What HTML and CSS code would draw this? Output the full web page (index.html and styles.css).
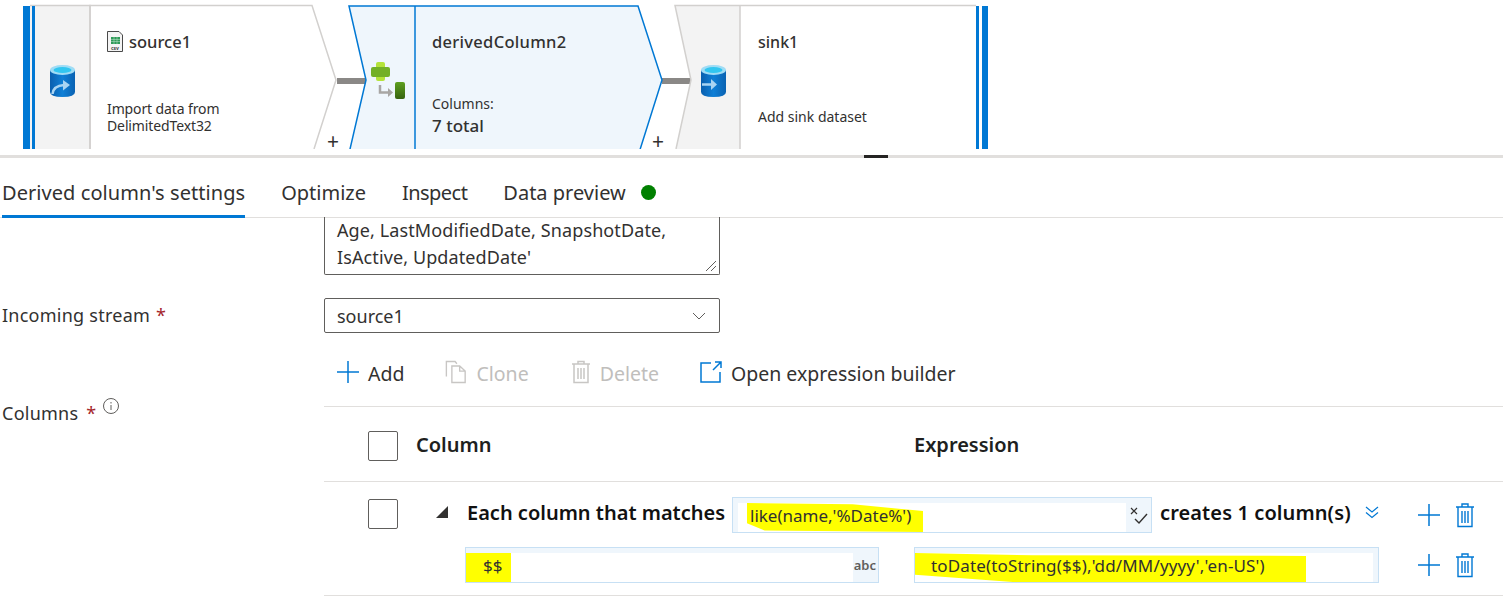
FILE: index.html
```html
<!DOCTYPE html>
<html lang="en">
<head>
<meta charset="utf-8">
<title>Derived column settings</title>
<link rel="stylesheet" href="styles.css">
</head>
<body>
<section class="canvas">
  <svg class="flow" width="1000" height="149" viewBox="0 0 1000 149">
    <defs>
      <linearGradient id="cyl" x1="0" x2="1" y1="0" y2="0"><stop offset="0" stop-color="#0a5fae"/><stop offset="0.5" stop-color="#0f7fd6"/><stop offset="1" stop-color="#0a62b2"/></linearGradient>
      <linearGradient id="bar" x1="0" x2="0" y1="0" y2="1"><stop offset="0" stop-color="#5ea01f"/><stop offset="1" stop-color="#37620f"/></linearGradient>
    </defs>
    <rect x="337" y="78" width="30" height="6" fill="#8a8886"/>
    <rect x="662" y="78" width="30" height="6" fill="#8a8886"/>
    <!-- source -->
    <path d="M23 149V6H312L336 80L314 149Z" fill="#fff"/>
    <path d="M30 149V6H90V149Z" fill="#f3f3f3"/>
    <path d="M90 149V5.500H312L336 80L314 149" fill="none" stroke="#d2d0ce" stroke-width="1.500"/>
    <path d="M30 5.500H90V149" fill="none" stroke="#d2d0ce" stroke-width="1.500"/>
    <rect x="23" y="6" width="7" height="143" fill="#0078d4"/>
    <rect x="32" y="6" width="3" height="143" fill="#0078d4"/>
    <!-- derived -->
    <path d="M349 6H638L662 80L638 156H348.400L366 80Z" fill="#eff6fc" stroke="#0078d4" stroke-width="1.500"/>
    <path d="M415 6V149" stroke="#0078d4" stroke-width="1.500"/>
    <!-- sink -->
    <path d="M675 6H988V149H676L691 80Z" fill="#fff"/>
    <path d="M675 6H740V149H676L691 80Z" fill="#f3f3f3"/>
    <path d="M740 5.500H976" stroke="#d2d0ce" stroke-width="1.500"/>
    <path d="M740 5.500V149M740 5.500H675L691 80L676 149" fill="none" stroke="#d2d0ce" stroke-width="1.500"/>
    <rect x="976" y="6" width="3" height="143" fill="#0078d4"/>
    <rect x="982" y="6" width="6" height="143" fill="#0078d4"/>
    <!-- source cylinder -->
    <path d="M50 70V92Q50 97 62.500 97T75 92V70Z" fill="url(#cyl)"/>
    <ellipse cx="62.500" cy="70" rx="12.500" ry="5" fill="#9fdcf5"/>
    <ellipse cx="62.500" cy="70" rx="9" ry="3" fill="#32c6f0"/>
    <path d="M52.500 94C53 89 57 85.500 64 85" fill="none" stroke="#a9d4f2" stroke-width="2.500"/>
    <path d="M63 80L70 85L63 90.500Z" fill="#a9d4f2"/>
    <!-- sink cylinder -->
    <path d="M701 70V92Q701 97 713.500 97T726 92V70Z" fill="url(#cyl)"/>
    <ellipse cx="713.500" cy="70" rx="12.500" ry="5" fill="#9fdcf5"/>
    <ellipse cx="713.500" cy="70" rx="9" ry="3" fill="#32c6f0"/>
    <path d="M702 84.500H712" stroke="#a9d4f2" stroke-width="2.500"/>
    <path d="M711 79L717 84.500L711 90Z" fill="#a9d4f2"/>
    <!-- derived icon -->
    <rect x="376" y="62" width="9" height="19" rx="2" fill="#b4e33a"/>
    <rect x="371" y="67" width="19" height="10" rx="2" fill="#73b026"/>
    <path d="M380 85V92.500H389" fill="none" stroke="#a8a6a4" stroke-width="2.500"/>
    <path d="M388 88L393 92.500L388 97Z" fill="#a8a6a4"/>
    <rect x="395" y="82" width="10" height="17" rx="2" fill="url(#bar)"/>
    <!-- csv file -->
    <path d="M107.500 31.500H119L122.500 35V51.500H107.500Z" fill="#f4f4f4" stroke="#4a4a4a"/>
    <rect x="111" y="37" width="9" height="7" fill="#2f9a58"/>
    <path d="M111 39.500H120M111 41.500H120M114 37V44M117 37V44" stroke="#bfe4cc" stroke-width=".500"/>
    <text class="csv" x="115" y="50" text-anchor="middle">csv</text>
  </svg>
  <div class="node-text source">
    <h3>source1</h3>
    <p class="desc">Import data from<br>DelimitedText32</p>
  </div>
  <div class="node-text derived">
    <h3>derivedColumn2</h3>
    <p class="desc">Columns:</p>
    <p class="total">7 total</p>
  </div>
  <div class="node-text sink">
    <h3>sink1</h3>
    <p class="desc">Add sink dataset</p>
  </div>
  <span class="plus plus-one">+</span>
  <span class="plus plus-two">+</span>
</section>

<div class="splitter"><span class="handle"></span></div>

<nav class="tabs">
  <a class="tab active">Derived column's settings</a>
  <a class="tab">Optimize</a>
  <a class="tab narrow">Inspect</a>
  <a class="tab">Data preview <i class="dot"></i></a>
</nav>

<main class="form">
  <div class="label"></div>
  <div class="textarea">Age, LastModifiedDate, SnapshotDate,<br>IsActive, UpdatedDate'
    <svg class="grip" width="12" height="12" viewBox="0 0 12 12"><path d="M1 11L11 1M6 11L11 6" stroke="#605e5c" fill="none"/></svg>
  </div>

  <div class="label stream">Incoming stream <span class="req">*</span></div>
  <div class="select">source1
    <svg width="14" height="8" viewBox="0 0 14 8"><path d="M1 1L7 7L13 1" fill="none" stroke="#605e5c"/></svg>
  </div>

  <div class="label cols">Columns <span class="req">*</span>
    <svg class="info" width="18" height="18" viewBox="0 0 18 18"><circle cx="9" cy="9" r="7.500" fill="none" stroke="#605e5c"/><path d="M9 8V13M9 5V6.500" stroke="#605e5c"/></svg>
  </div>
  <div class="columns">
    <div class="toolbar">
      <span class="tool t-add"><svg width="24" height="24" viewBox="0 0 24 24"><path d="M12 1V23M1 12H23" stroke="#0078d4" stroke-width="1.500"/></svg>Add</span>
      <span class="tool off t-clone"><svg width="22" height="24" viewBox="0 0 24 26"><path d="M1.500 18V1.500H11L13 4M7.500 24.500V6.500H16L22 12V24.500ZM16 6.500V12H22" fill="none" stroke="#c8c6c4" stroke-width="1.500"/></svg>Clone</span>
      <span class="tool off t-del"><svg width="20" height="24" viewBox="0 0 20 24"><path d="M1 4H19M7 4V1.500H13V4M3 4V22.500H17V4M7 8V19M10 8V19M13 8V19" fill="none" stroke="#c8c6c4" stroke-width="1.500"/></svg>Delete</span>
      <span class="tool t-open"><svg width="22" height="22" viewBox="0 0 22 22"><path d="M11 2H1V21H20V11M13 9L21 1M15 1H21V7" fill="none" stroke="#0078d4" stroke-width="1.500"/></svg>Open expression builder</span>
    </div>
    <div class="thead">
      <span class="check"></span>
      <b class="th-col">Column</b>
      <b class="th-exp">Expression</b>
    </div>
    <div class="tbody">
      <div class="line first">
        <span class="check"></span>
        <svg class="caret" width="12" height="12" viewBox="0 0 12 12"><path d="M12 0V12H0Z" fill="#323130"/></svg>
        <b class="match">Each column that matches</b>
        <div class="field f-like">
          <span class="inner"><span class="mark mark-like">like(name,'%Date%')</span></span>
          <svg class="xcheck" width="22" height="24" viewBox="0 0 22 24"><path d="M4 6L10 12M10 6L4 12" stroke="#323130" stroke-width="1.200"/><path d="M8 17L12 21L20 12" fill="none" stroke="#323130" stroke-width="1.400"/></svg>
        </div>
        <b class="creates">creates 1 column(s)</b>
        <svg class="chev" width="14" height="14" viewBox="0 0 14 14"><path d="M1 2L7 7L13 2M1 7.500L7 12.500L13 7.500" fill="none" stroke="#0078d4" stroke-width="1.200"/></svg>
        <span class="acts">
          <svg width="22" height="22" viewBox="0 0 22 22"><path d="M11 0V22M0 11H22" stroke="#0078d4" stroke-width="1.500"/></svg>
          <svg width="20" height="26" viewBox="0 0 20 26"><path d="M1 5H19M7 5V2H13V5M3 5V24.500H17V5M7 9V21M10 9V21M13 9V21" fill="none" stroke="#0078d4" stroke-width="1.400"/></svg>
        </span>
      </div>
      <div class="line second">
        <div class="field f-name">
          <span class="inner"><span class="mark mark-name">$$</span></span>
          <span class="abc">abc</span>
        </div>
        <div class="field f-expr">
          <span class="inner"><span class="mark mark-expr">toDate(toString($$),'dd/MM/yyyy','en-US')</span></span>
        </div>
        <span class="acts">
          <svg width="22" height="22" viewBox="0 0 22 22"><path d="M11 0V22M0 11H22" stroke="#0078d4" stroke-width="1.500"/></svg>
          <svg width="20" height="26" viewBox="0 0 20 26"><path d="M1 5H19M7 5V2H13V5M3 5V24.500H17V5M7 9V21M10 9V21M13 9V21" fill="none" stroke="#0078d4" stroke-width="1.400"/></svg>
        </span>
      </div>
    </div>
  </div>
</main>
</body>
</html>
```
FILE: styles.css
```css
* { box-sizing: border-box; }
html, body { margin: 0; padding: 0; }
body {
  width: 1503px;
  height: 596px;
  overflow: hidden;
  background: #fff;
  color: #323130;
  font-family: "Noto Sans", "Open Sans", sans-serif;
  font-size: 18px;
}
.canvas { position: relative; height: 149px; }
.flow { position: absolute; left: 0; top: 0; }
.csv { font-size: 5px; font-weight: 700; fill: #444; }
.node-text { position: absolute; top: 0; }
.node-text h3 { position: absolute; left: 0; top: 30px; margin: 0; font-size: 16.500px; line-height: 24px; font-weight: 500; white-space: nowrap; }
.node-text p { position: absolute; left: 0; margin: 0; white-space: nowrap; }
.desc { font-size: 14px; line-height: 17px; }
.source { left: 107px; }
.source h3 { left: 22px; }
.source .desc { top: 100px; letter-spacing: -.12px; }
.derived { left: 432px; }
.derived h3 { letter-spacing: .3px; }
.derived .desc { top: 95px; }
.total { top: 115px; font-size: 17px; line-height: 22px; font-weight: 500; }
.sink { left: 758px; }
.sink h3 { font-size: 16px; }
.sink .desc { top: 108px; }
.plus { position: absolute; top: 133px; font-size: 21px; line-height: 16px; color: #323130; }
.plus-one { left: 327px; }
.plus-two { left: 652px; }

.splitter { position: relative; height: 3px; margin-top: 6px; background: #e1dfdd; }
.handle { position: absolute; left: 864px; top: 0; width: 24px; height: 3px; background: #252423; }

.tabs { display: flex; height: 60px; padding-left: 2px; border-bottom: 1px solid #e1dfdd; }
.tab { display: flex; align-items: center; height: 60px; margin-right: 36px; padding-top: 8px; font-size: 20px; }
.tab.active { border-bottom: 3px solid #0078d4; padding-top: 11px; letter-spacing: .06px; }
.tab.narrow { margin-right: 36px; letter-spacing: -.55px; }
.dot { display: inline-block; width: 15px; height: 15px; margin-left: 15px; border-radius: 50%; background: #008000; }

.form { display: grid; grid-template-columns: 322px 1fr; padding-left: 2px; }
.label { font-size: 18px; line-height: 24px; letter-spacing: .25px; }
.req { margin-left: 3px; color: #a4262c; }
.stream .req { margin-left: 1px; }
.textarea { position: relative; width: 396px; height: 58px; margin-top: -1px; padding: 0 12px; font-size: 18px; line-height: 27px; letter-spacing: .11px; border: 1px solid #605e5c; border-top: 0; border-radius: 0 0 2px 2px; }
.grip { position: absolute; right: 2px; bottom: 2px; }
.stream { margin-top: 28px; }
.select { display: flex; align-items: center; justify-content: space-between; width: 396px; height: 35px; margin-top: 23px; padding: 0 13px 0 12px; border: 1px solid #605e5c; border-radius: 2px; font-size: 18px; }
.cols { margin-top: 64px; }
.info { vertical-align: 5px; margin-left: 1px; }

.toolbar { position: relative; display: flex; align-items: center; height: 74px; padding-top: 8px; padding-left: 12px; border-bottom: 1px solid #e1dfdd; margin-right: -2px; }
.tool { display: flex; align-items: center; font-size: 19.500px; }
.tool svg { margin-right: 9px; margin-top: -4px; }
.off { color: #c0bebc; }
.t-add { margin-right: 41px; }
.t-add svg { margin-right: 8px; }
.t-clone { margin-right: 42px; }
.t-del { margin-right: 41px; }

.thead { display: flex; align-items: center; height: 75px; padding-left: 44px; padding-top: 4px; border-bottom: 1px solid #e1dfdd; font-size: 20px; }
.check { display: block; flex: none; width: 30px; height: 30px; border: 1px solid #605e5c; border-radius: 2px; background: #fff; }
.th-col { margin-left: 18px; margin-top: -3px; width: 498px; font-weight: 600; color: #201f1e; }
.th-exp { margin-top: -3px; font-weight: 600; color: #201f1e; }
.tbody { height: 114px; border-bottom: 1px solid #e1dfdd; padding-top: 15px; }
.line { display: flex; align-items: center; }
.first { padding-left: 44px; height: 36px; }
.first .check { margin-top: -2px; }
.caret { margin-left: 38px; margin-top: -6px; }
.match { margin-left: 19px; margin-top: -6px; width: 265px; font-weight: 600; font-size: 20px; color: #111; white-space: nowrap; }
.field { position: relative; display: flex; height: 36px; padding: 5px 0 0 5px; border: 1px solid #c7e0f4; background: #eff6fc; font-size: 17px; }
.inner { display: block; position: relative; flex: 1; height: 29px; background: #fff; }
.mark { position: absolute; top: 0; white-space: nowrap; line-height: 26px; background: #ff0; }
.f-like { width: 420px; padding-right: 25px; }
.mark-like { left: 9px; width: 176px; height: 29px; padding-left: 3px; clip-path: polygon(0 0, 60% 4%, 100% 28%, 100% 100%, 10% 95%, 0 70%); }
.xcheck { position: absolute; right: 2px; top: 4px; }
.creates { margin-left: 8px; margin-top: -6px; width: 205px; font-weight: 600; font-size: 20px; letter-spacing: .1px; color: #111; white-space: nowrap; }
.chev { margin-top: -6px; margin-right: 39px; }
.acts { display: flex; align-items: center; gap: 15px; }
.second { height: 36px; margin-top: 14px; padding-left: 141px; }
.f-name { width: 414px; padding-left: 0; padding-right: 25px; }
.abc { position: absolute; right: 2px; top: 8px; font-size: 13px; font-weight: 600; color: #605e5c; }
.mark-name { left: 0; width: 45px; height: 29px; padding-left: 17px; }
.f-expr { width: 465px; margin-left: 35px; padding-left: 0; margin-right: 39px; padding-right: 5px; }
.mark-expr { left: 0; width: 391px; height: 29px; padding-left: 16px; letter-spacing: .15px; clip-path: polygon(0 0, 30% 8%, 100% 10%, 100% 100%, 25% 100%, 0 75%); }
```
